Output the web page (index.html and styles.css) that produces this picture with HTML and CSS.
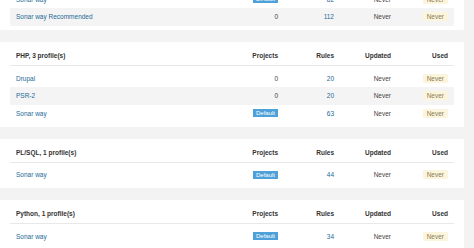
FILE: index.html
```html
<!DOCTYPE html>
<html lang="en">
<head>
<meta charset="utf-8">
<title>Quality Profiles</title>
<link rel="stylesheet" href="styles.css">
</head>
<body>
<main class="page">
  <section class="card card-first">
    <div class="grid head">
      <div class="cell">JavaScript, 2 profile(s)</div>
      <div class="cell num">Projects</div>
      <div class="cell num">Rules</div>
      <div class="cell num">Updated</div>
      <div class="cell num">Used</div>
    </div>
    <div class="grid row">
      <div class="cell"><a class="link" href="#">Sonar way</a></div>
      <div class="cell num"><span class="badge-default">Default</span></div>
      <div class="cell num"><a class="link" href="#">82</a></div>
      <div class="cell num">Never</div>
      <div class="cell num"><span class="badge-never">Never</span></div>
    </div>
    <div class="grid row alt">
      <div class="cell"><a class="link" href="#">Sonar way Recommended</a></div>
      <div class="cell num">0</div>
      <div class="cell num"><a class="link" href="#">112</a></div>
      <div class="cell num">Never</div>
      <div class="cell num"><span class="badge-never">Never</span></div>
    </div>
  </section>

  <section class="card">
    <div class="grid head">
      <div class="cell">PHP, 3 profile(s)</div>
      <div class="cell num">Projects</div>
      <div class="cell num">Rules</div>
      <div class="cell num">Updated</div>
      <div class="cell num">Used</div>
    </div>
    <div class="grid row">
      <div class="cell"><a class="link" href="#">Drupal</a></div>
      <div class="cell num">0</div>
      <div class="cell num"><a class="link" href="#">20</a></div>
      <div class="cell num">Never</div>
      <div class="cell num"><span class="badge-never">Never</span></div>
    </div>
    <div class="grid row alt">
      <div class="cell"><a class="link" href="#">PSR-2</a></div>
      <div class="cell num">0</div>
      <div class="cell num"><a class="link" href="#">20</a></div>
      <div class="cell num">Never</div>
      <div class="cell num"><span class="badge-never">Never</span></div>
    </div>
    <div class="grid row">
      <div class="cell"><a class="link" href="#">Sonar way</a></div>
      <div class="cell num"><span class="badge-default">Default</span></div>
      <div class="cell num"><a class="link" href="#">63</a></div>
      <div class="cell num">Never</div>
      <div class="cell num"><span class="badge-never">Never</span></div>
    </div>
  </section>

  <section class="card">
    <div class="grid head">
      <div class="cell">PL/SQL, 1 profile(s)</div>
      <div class="cell num">Projects</div>
      <div class="cell num">Rules</div>
      <div class="cell num">Updated</div>
      <div class="cell num">Used</div>
    </div>
    <div class="grid row">
      <div class="cell"><a class="link" href="#">Sonar way</a></div>
      <div class="cell num"><span class="badge-default">Default</span></div>
      <div class="cell num"><a class="link" href="#">44</a></div>
      <div class="cell num">Never</div>
      <div class="cell num"><span class="badge-never">Never</span></div>
    </div>
  </section>

  <section class="card">
    <div class="grid head">
      <div class="cell">Python, 1 profile(s)</div>
      <div class="cell num">Projects</div>
      <div class="cell num">Rules</div>
      <div class="cell num">Updated</div>
      <div class="cell num">Used</div>
    </div>
    <div class="grid row">
      <div class="cell"><a class="link" href="#">Sonar way</a></div>
      <div class="cell num"><span class="badge-default">Default</span></div>
      <div class="cell num"><a class="link" href="#">34</a></div>
      <div class="cell num">Never</div>
      <div class="cell num"><span class="badge-never">Never</span></div>
    </div>
  </section>
</main>
</body>
</html>
```

FILE: styles.css
```css
html, body {
  margin: 0;
  padding: 0;
  background: #f3f3f3;
}

body {
  font-family: "Liberation Sans", Arial, sans-serif;
  font-size: 6.5px;
  color: #444;
  overflow: hidden;
}

.page {
  width: 464px;
}

.card {
  background: #fff;
  padding: 7px 10px 4.5px;
  margin-bottom: 12px;
}

.card-first {
  margin-top: -37px;
}

.grid {
  display: grid;
  grid-template-columns: 217px 57px 56px 57px 57px;
}

.head {
  font-weight: bold;
  color: #333;
  line-height: 14px;
  padding-bottom: 2px;
  border-bottom: 1px solid #e8e8e8;
  margin-bottom: 3.5px;
}

.row {
  height: 17.5px;
  align-items: center;
}

.row.alt {
  background: #f4f4f4;
}

.cell {
  padding: 0 6px;
  white-space: nowrap;
}

.num {
  text-align: right;
}

.link {
  color: #236a97;
  text-decoration: none;
}

.badge-default {
  display: inline-block;
  background: #4ea1d8;
  color: #fff;
  font-size: 6px;
  line-height: 6px;
  padding: 1px 3px;
}

.badge-never {
  display: inline-block;
  background: #fcf5dd;
  color: #8a7b55;
  line-height: 9px;
  padding: 0 4px;
  border-radius: 1px;
}
```
